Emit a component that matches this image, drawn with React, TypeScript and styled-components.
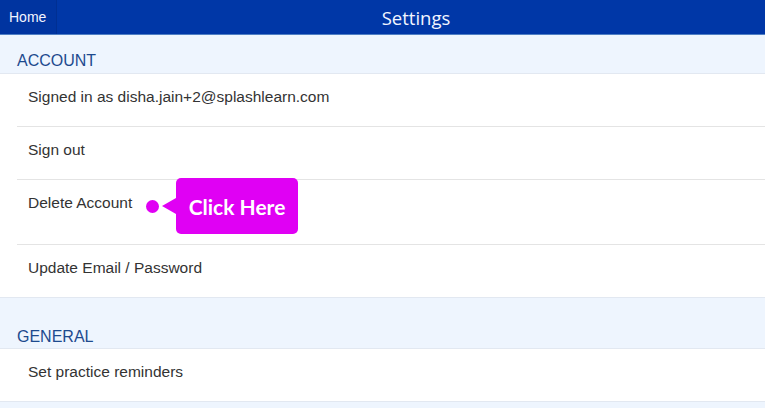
import React from "react";
import styled, { createGlobalStyle } from "styled-components";

const Global = createGlobalStyle`
  html, body { margin: 0; padding: 0; background: #eef5fe; }
  body { font-family: "Liberation Sans", Arial, sans-serif; }
  * { box-sizing: border-box; }
`;

const Page = styled.div`
  width: 765px;
  height: 408px;
  overflow: hidden;
  background: #eef5fe;
  display: flex;
  flex-direction: column;
`;

const Header = styled.header`
  height: 35px;
  flex: none;
  background: #0037a7;
  border-bottom: 1px solid #4f7fc4;
  display: flex;
  align-items: stretch;
`;

const HomeTab = styled.div`
  width: 57px;
  background: #0034a0;
  border-right: 1px solid #002f92;
  color: #f2f5ff;
  font-size: 14px;
  display: flex;
  align-items: center;
  padding-left: 9px;
`;

const Title = styled.h1`
  flex: 1;
  margin: 0;
  padding-left: 10px;
  display: flex;
  align-items: center;
  justify-content: center;
  color: #f2f5ff;
  font-family: "Open Sans", sans-serif;
  font-weight: 400;
  font-size: 18.5px;
`;

const SectionHead = styled.div<{ $h: number; $pb: number }>`
  height: ${(p) => p.$h}px;
  flex: none;
  display: flex;
  align-items: flex-end;
  padding: 0 0 ${(p) => p.$pb}px 17px;
  color: #1d4a8e;
  font-size: 16px;
  line-height: 18px;
  border-bottom: 1px solid #e2e8f1;
`;

const Group = styled.div`
  flex: none;
  background: #ffffff;
  border-bottom: 1px solid #e2e8f1;
  padding-left: 17px;
`;

const Row = styled.div<{ $h: number; $last?: boolean }>`
  position: relative;
  height: ${(p) => p.$h}px;
  padding: 14px 0 0 11px;
  border-bottom: ${(p) => (p.$last ? "none" : "1px solid #e4e4e4")};
  color: #333333;
  font-size: 15.5px;
  line-height: 17px;
`;

const Callout = styled.div`
  position: absolute;
  left: 129px;
  top: -2px;
  display: flex;
  align-items: center;
`;

const Dot = styled.span`
  width: 13px;
  height: 13px;
  border-radius: 50%;
  background: #e000f4;
`;

const Arrow = styled.span`
  width: 0;
  height: 0;
  margin-left: 3px;
  border-top: 8px solid transparent;
  border-bottom: 8px solid transparent;
  border-right: 14px solid #e000f4;
`;

const Bubble = styled.div`
  width: 122px;
  height: 56px;
  border-radius: 5px;
  background: #e000f4;
  color: #ffffff;
  font-family: "Lato", sans-serif;
  font-weight: 700;
  font-size: 21px;
  display: flex;
  align-items: center;
  justify-content: center;
`;

export default function App() {
  return (
    <Page>
      <Global />
      <Header>
        <HomeTab>Home</HomeTab>
        <Title>Settings</Title>
      </Header>
      <SectionHead $h={39} $pb={3}>ACCOUNT</SectionHead>
      <Group>
        <Row $h={53}>Signed in as disha.jain+2@splashlearn.com</Row>
        <Row $h={53}>Sign out</Row>
        <Row $h={65}>
          Delete Account
          <Callout>
            <Dot />
            <Arrow />
            <Bubble>Click Here</Bubble>
          </Callout>
        </Row>
        <Row $h={52} $last>
          Update Email / Password
        </Row>
      </Group>
      <SectionHead $h={51} $pb={2}>GENERAL</SectionHead>
      <Group>
        <Row $h={52} $last>
          Set practice reminders
        </Row>
      </Group>
    </Page>
  );
}
